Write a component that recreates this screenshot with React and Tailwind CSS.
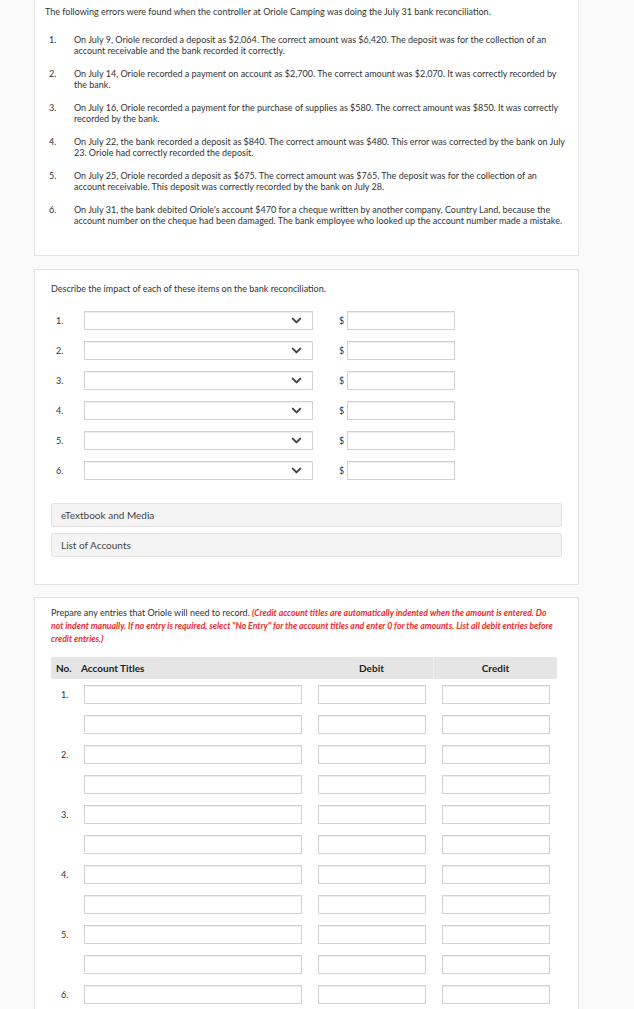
import { ChevronDown } from "lucide-react";

const errors = [
  "On July 9, Oriole recorded a deposit as $2,064. The correct amount was $6,420. The deposit was for the collection of an account receivable and the bank recorded it correctly.",
  "On July 14, Oriole recorded a payment on account as $2,700. The correct amount was $2,070. It was correctly recorded by the bank.",
  "On July 16, Oriole recorded a payment for the purchase of supplies as $580. The correct amount was $850. It was correctly recorded by the bank.",
  "On July 22, the bank recorded a deposit as $840. The correct amount was $480. This error was corrected by the bank on July 23. Oriole had correctly recorded the deposit.",
  "On July 25, Oriole recorded a deposit as $675. The correct amount was $765. The deposit was for the collection of an account receivable. This deposit was correctly recorded by the bank on July 28.",
  "On July 31, the bank debited Oriole's account $470 for a cheque written by another company, Country Land, because the account number on the cheque had been damaged. The bank employee who looked up the account number made a mistake.",
];

const field =
  "h-[19px] border border-[#d2d2d2] bg-white shadow-[inset_0_1px_1px_rgba(0,0,0,0.07)]";

function ImpactRow({ n }) {
  return (
    <div className="flex items-center">
      <span className="w-[33px] pl-[5px]">{n}.</span>
      <div className={`${field} flex w-[229px] items-center justify-end pr-[8px]`}>
        <ChevronDown size={15} strokeWidth={3.2} className="text-[#444]" />
      </div>
      <span className="ml-[26px] w-[8px] text-[#333]">$</span>
      <div className={`${field} w-[108px]`} />
    </div>
  );
}

function EntryRow({ n }) {
  return (
    <div className="grid grid-cols-[30px_229px_123px_124px] items-center">
      <span className="pl-[10px]">{n ? `${n}.` : ""}</span>
      <div className={`${field} ml-[3px] w-[218px]`} />
      <div className={`${field} ml-[8px] w-[108px]`} />
      <div className={`${field} ml-[9px] w-[108px]`} />
    </div>
  );
}

export default function App() {
  const rows = [1, 2, 3, 4, 5, 6];
  return (
    <div className="min-h-screen bg-[#f9f9f9] font-['Lato','Open_Sans',sans-serif] text-[9px] leading-[11px] text-[#333]">
      <div className="ml-[34px] w-[545px]">
        <section className="border-x border-b border-[#e4e4e4] bg-white pb-[29px] pl-[10px] pt-[6px]">
          <p>The following errors were found when the controller at Oriole Camping was doing the July 31 bank reconciliation.</p>
          <ol className="mt-[17px] flex flex-col gap-[12px]">
            {errors.map((t, i) => (
              <li key={i} className="flex">
                <span className="w-[29px] shrink-0 pl-[4px]">{i + 1}.</span>
                <span className="w-[492px]">{t}</span>
              </li>
            ))}
          </ol>
        </section>

        <section className="mt-[13px] border border-[#e2e2e2] bg-white px-[16px] pb-[27px] pt-[13px]">
          <p>Describe the impact of each of these items on the bank reconciliation.</p>
          <div className="mt-[17px] flex flex-col gap-[11px]">
            {rows.map((n) => (
              <ImpactRow key={n} n={n} />
            ))}
          </div>
          <div className="mt-[23px] flex flex-col gap-[6px]">
            <div className="h-[24px] rounded-[2px] border border-[#e2e2e2] bg-[#f4f4f4] pl-[9px] text-[10px] leading-[22px] text-[#444]">eTextbook and Media</div>
            <div className="h-[24px] rounded-[2px] border border-[#e2e2e2] bg-[#f4f4f4] pl-[9px] text-[10px] leading-[22px] text-[#444]">List of Accounts</div>
          </div>
        </section>

        <section className="mt-[12px] border border-[#e2e2e2] bg-white px-[16px] pb-[20px] pt-[8px]">
          <p className="w-[508px] text-[9px] leading-[13px]">
            Prepare any entries that Oriole will need to record.{" "}
            <span className="text-[8.7px] font-bold italic text-[#ee2b2b]">
              (Credit account titles are automatically indented when the amount is entered. Do not indent manually. If no entry is required, select "No Entry" for the account titles and enter 0 for the amounts. List all debit entries before credit entries.)
            </span>
          </p>
          <div className="mt-[12px] w-[506px]">
            <div className="grid h-[22px] grid-cols-[30px_229px_123px_124px] items-center bg-[#e5e5e5] text-[10px] font-bold text-[#222]">
              <span className="pl-[5px]">No.</span>
              <span>Account Titles</span>
              <span className="text-center">Debit</span>
              <span className="border-l border-[#eeeeee] text-center leading-[22px]">Credit</span>
            </div>
            <div className="mt-[6px] flex flex-col gap-[11px]">
              {rows.map((n) => (
                <div key={n} className="flex flex-col gap-[11px]">
                  <EntryRow n={n} />
                  <EntryRow />
                </div>
              ))}
            </div>
          </div>
        </section>
      </div>
    </div>
  );
}
